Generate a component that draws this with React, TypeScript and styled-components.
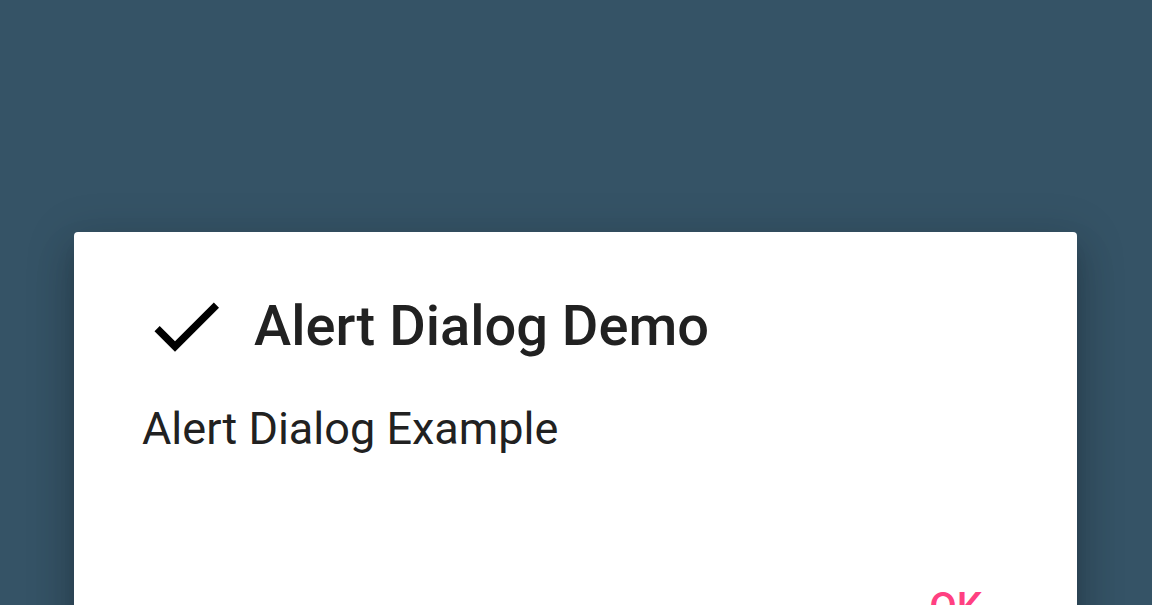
import React from 'react';
import styled, { createGlobalStyle } from 'styled-components';

const GlobalStyle = createGlobalStyle`
  html, body {
    margin: 0;
    padding: 0;
    height: 100%;
    overflow: hidden;
    background: #355366;
    font-family: Roboto, 'Noto Sans', sans-serif;
  }
`;

const Backdrop = styled.div`
  height: 605px;
  padding: 232px 75px 0 74px;
  box-sizing: border-box;
  overflow: hidden;
`;

const Dialog = styled.section`
  background: #fff;
  border-radius: 4px;
  height: 500px;
  padding: 50px 68px 0 68px;
  box-sizing: border-box;
  box-shadow: 0 11px 15px -7px rgba(0, 0, 0, 0.2), 0 24px 38px 3px rgba(0, 0, 0, 0.14),
    0 9px 46px 8px rgba(0, 0, 0, 0.12);
  display: flex;
  flex-direction: column;
`;

const Title = styled.h2`
  display: flex;
  align-items: center;
  gap: 24px;
  margin: 0;
  font-size: 56px;
  font-weight: 500;
  color: #212121;
`;

const Message = styled.p`
  margin: 32px 0 0 0;
  font-size: 45px;
  font-weight: 400;
  color: #212121;
`;

const Actions = styled.div`
  display: flex;
  justify-content: flex-end;
  margin-top: 129px;
  padding-right: 7px;
`;

const TextButton = styled.button`
  border: none;
  background: none;
  padding: 0 20px;
  font-family: inherit;
  font-size: 40px;
  font-weight: 500;
  color: #ff4081;
  text-transform: uppercase;
`;

const CheckIcon = () => (
  <svg width="88" height="88" viewBox="0 0 24 24" fill="#000">
    <path d="M9 16.17L4.83 12l-1.42 1.41L9 19 21 7l-1.41-1.41z" />
  </svg>
);

export default function App() {
  return (
    <>
      <GlobalStyle />
      <Backdrop>
        <Dialog>
          <Title>
            <CheckIcon />
            Alert Dialog Demo
          </Title>
          <Message>Alert Dialog Example</Message>
          <Actions>
            <TextButton>Ok</TextButton>
          </Actions>
        </Dialog>
      </Backdrop>
    </>
  );
}
